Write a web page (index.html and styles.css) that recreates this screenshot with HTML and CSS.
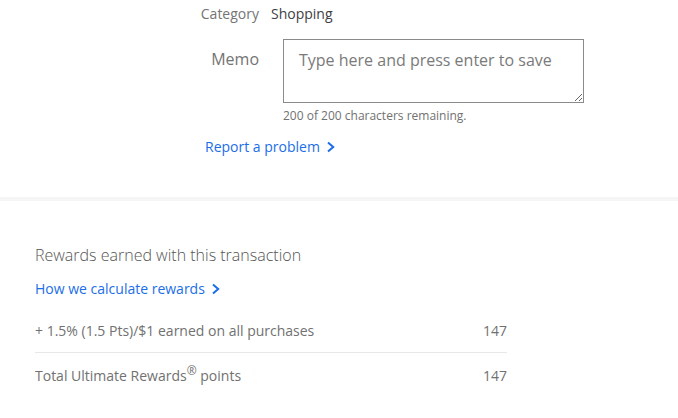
FILE: index.html
```html
<!DOCTYPE html>
<html>
<head>
<meta charset="utf-8">
<link rel="stylesheet" href="styles.css">
</head>
<body>
<div class="details">
  <div class="row category">
    <span class="label">Category</span>
    <span class="value">Shopping</span>
  </div>
  <div class="row memo">
    <span class="label memo-label">Memo</span>
    <div class="memo-field">
      <textarea class="memo-input" placeholder="Type here and press enter to save"></textarea>
      <div class="hint">200 of 200 characters remaining.</div>
    </div>
  </div>
  <a class="link report" href="#">Report a problem <svg class="chev" viewBox="0 0 8 12" width="8" height="12"><path d="M1 1.6 L6.2 6 L1 10.4" fill="none" stroke="currentColor" stroke-width="2"/></svg></a>
</div>
<div class="sep"></div>
<div class="rewards">
  <h2 class="rewards-title">Rewards earned with this transaction</h2>
  <a class="link calc" href="#">How we calculate rewards <svg class="chev" viewBox="0 0 8 12" width="8" height="12"><path d="M1 1.6 L6.2 6 L1 10.4" fill="none" stroke="currentColor" stroke-width="2"/></svg></a>
  <div class="rw-row first">
    <span>+ 1.5% (1.5 Pts)/$1 earned on all purchases</span>
    <span>147</span>
  </div>
  <div class="rw-row second">
    <span>Total Ultimate Rewards<sup>®</sup> points</span>
    <span>147</span>
  </div>
</div>
</body>
</html>
```
FILE: styles.css
```css
html, body {
  margin: 0;
  padding: 0;
  background: #fff;
  font-family: "Open Sans", "Liberation Sans", sans-serif;
  color: #717171;
}
.details {
  padding-top: 4px;
  height: 197px;
  box-sizing: border-box;
}
.row {
  display: flex;
  align-items: flex-start;
}
.label {
  width: 259px;
  text-align: right;
  color: #747474;
}
.category {
  font-size: 14px;
  line-height: 20px;
}
.category .value {
  margin-left: 12px;
  color: #414042;
}
.memo {
  margin-top: 15px;
}
.memo-label {
  font-size: 16px;
  line-height: 24px;
  padding-top: 8px;
}
.memo-field {
  margin-left: 24px;
}
.memo-input {
  display: block;
  width: 301px;
  height: 64px;
  box-sizing: border-box;
  border: 1px solid #8a8a8a;
  border-radius: 0;
  padding: 8px 15px;
  font-family: "Open Sans", "Liberation Sans", sans-serif;
  font-size: 16px;
  line-height: 24px;
  color: #414042;
  margin: 0;
}
.memo-input::placeholder {
  color: #7a7a7a;
  opacity: 1;
}
.hint {
  font-size: 12px;
  line-height: 16px;
  margin-top: 5px;
  color: #717171;
}
.link {
  display: inline-flex;
  align-items: center;
  gap: 7px;
  color: #1b6ee8;
  text-decoration: none;
  font-size: 14px;
  line-height: 20px;
}
.report {
  margin-left: 205px;
  margin-top: 13px;
}
.sep {
  height: 4px;
  background: #f5f5f5;
}
.rewards {
  padding: 42px 0 0 35px;
  width: 472px;
}
.rewards-title {
  margin: 0;
  font-size: 16px;
  font-weight: 300;
  line-height: 24px;
  color: #555;
}
.calc {
  margin-top: 12px;
}
.rw-row {
  display: flex;
  justify-content: space-between;
  font-size: 14px;
  line-height: 20px;
  color: #717171;
}
.rw-row.first {
  margin-top: 10px;
  padding: 12px 0 11px;
  border-bottom: 1px solid #e8e8e8;
}
.rw-row.second {
  padding: 13px 0 12px;
}
.rw-row sup {
  font-size: 12px;
  line-height: 0;
  vertical-align: 6px;
}
```
